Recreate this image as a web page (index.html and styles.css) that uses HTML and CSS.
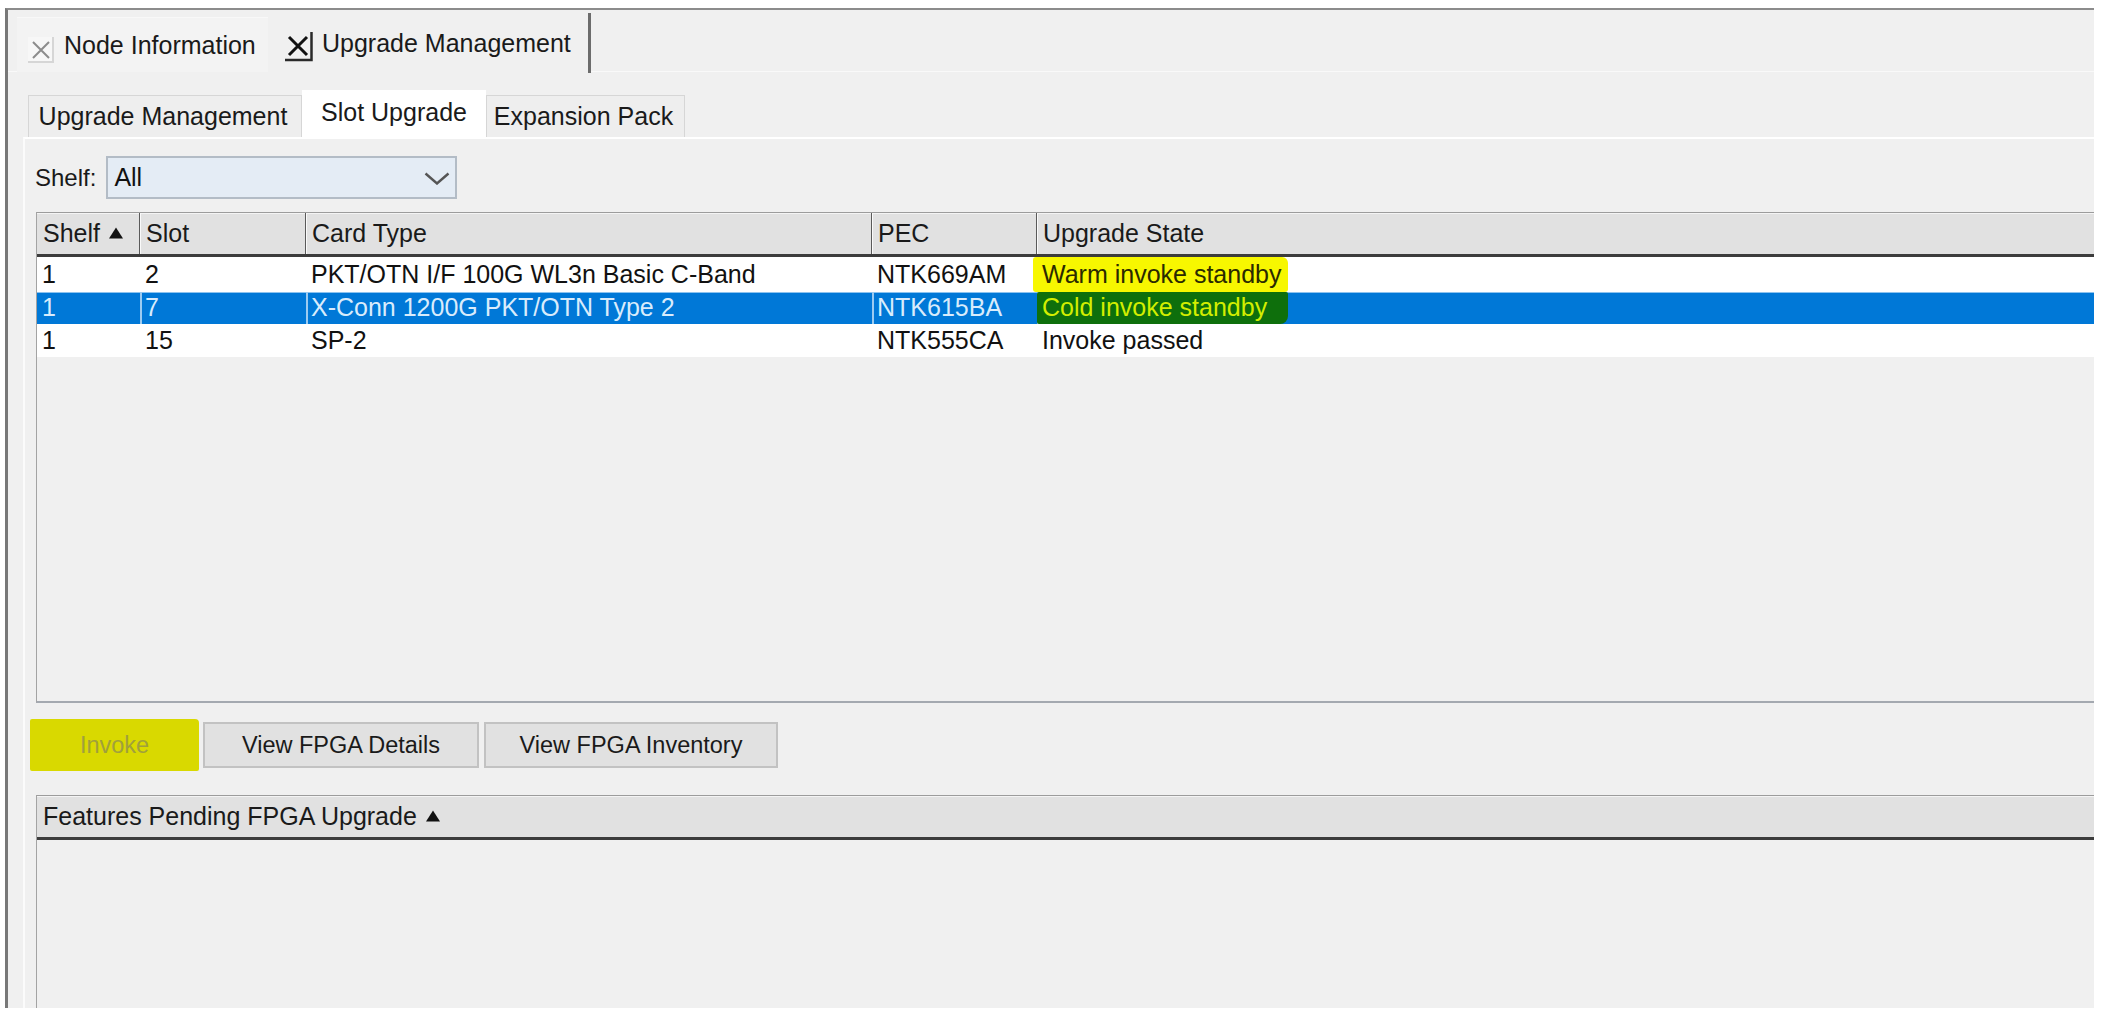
FILE: index.html
```html
<!DOCTYPE html>
<html>
<head>
<meta charset="utf-8">
<title>Slot Upgrade</title>
<link rel="stylesheet" href="styles.css">
</head>
<body>
<div class="window">
  <div class="toptabs">
    <div class="ttab ttab-inactive">
      <svg class="xicon-gray" width="26" height="26" viewBox="0 0 26 26">
        <rect x="0" y="0" width="26" height="26" fill="#f7f7f7"/>
        <path d="M25 0 V25 H0" fill="none" stroke="#d6d6d6" stroke-width="2"/>
        <path d="M5 5 L21 21 M21 5 L5 21" stroke="#8c8c8c" stroke-width="2" fill="none"/>
      </svg>
      <span class="ttab-label">Node Information</span>
    </div>
    <div class="ttab ttab-active">
      <svg class="xicon-black" width="30" height="32" viewBox="0 0 30 32">
        <path d="M5 6 L23 24 M23 6 L5 24" stroke="#111" stroke-width="3" fill="none"/>
        <path d="M1 29 H27.5 V1" fill="none" stroke="#2a2a2a" stroke-width="2.5"/>
      </svg>
      <span class="ttab-label">Upgrade Management</span>
    </div>
  </div>

  <div class="subtabs">
    <div class="stab stab-um">Upgrade Management</div>
    <div class="stab stab-active stab-su">Slot Upgrade</div>
    <div class="stab stab-ep">Expansion Pack</div>
  </div>

  <div class="panel">
    <div class="filter">
      <span class="filter-label">Shelf:</span>
      <div class="combo">
        <span class="combo-value">All</span>
        <svg class="chev" width="26" height="13" viewBox="0 0 26 13">
          <path d="M1.5 1.5 L13 11.5 L24.5 1.5" fill="none" stroke="#555" stroke-width="2.4"/>
        </svg>
      </div>
    </div>

    <div class="table table-slots">
      <div class="thead">
        <div class="th c-shelf">Shelf<svg class="sort" width="14" height="12" viewBox="0 0 14 12"><polygon points="0,11.5 7,0.5 14,11.5" fill="#111"/></svg></div>
        <div class="th c-slot">Slot</div>
        <div class="th c-card">Card Type</div>
        <div class="th c-pec">PEC</div>
        <div class="th c-state">Upgrade State</div>
      </div>
      <div class="tbody">
        <div class="tr">
          <div class="td c-shelf">1</div>
          <div class="td c-slot">2</div>
          <div class="td c-card">PKT/OTN I/F 100G WL3n Basic C-Band</div>
          <div class="td c-pec">NTK669AM</div>
          <div class="td c-state"><span class="hl hl-yellow">Warm invoke standby</span></div>
        </div>
        <div class="tr tr-selected">
          <div class="td c-shelf">1</div>
          <div class="td c-slot">7</div>
          <div class="td c-card">X-Conn 1200G PKT/OTN Type 2</div>
          <div class="td c-pec">NTK615BA</div>
          <div class="td c-state"><span class="hl hl-green">Cold invoke standby</span></div>
        </div>
        <div class="tr">
          <div class="td c-shelf">1</div>
          <div class="td c-slot">15</div>
          <div class="td c-card">SP-2</div>
          <div class="td c-pec">NTK555CA</div>
          <div class="td c-state">Invoke passed</div>
        </div>
      </div>
    </div>

    <div class="buttons">
      <div class="btn btn-invoke">Invoke</div>
      <div class="btn btn-details">View FPGA Details</div>
      <div class="btn btn-inventory">View FPGA Inventory</div>
    </div>

    <div class="table table-features">
      <div class="thead">
        <div class="th c-feature">Features Pending FPGA Upgrade<svg class="sort" width="14" height="12" viewBox="0 0 14 12"><polygon points="0,11.5 7,0.5 14,11.5" fill="#111"/></svg></div>
      </div>
      <div class="tbody-empty"></div>
    </div>
  </div>
</div>
</body>
</html>
```

FILE: styles.css
```css
html, body {
  margin: 0;
  padding: 0;
  background: #ffffff;
}

body {
  font-family: "Liberation Sans", Arial, sans-serif;
  font-size: 25px;
  color: #111;
}

.window {
  box-sizing: border-box;
  margin: 8px 0 0 5px;
  width: 2089px;
  height: 1000px;
  background: #f0f0f0;
  border-top: 2px solid #8c8c8c;
  border-left: 3px solid #787878;
  display: flex;
  flex-direction: column;
  overflow: hidden;
}

/* ---------- top tabs ---------- */
.toptabs {
  height: 62px;
  flex: none;
  display: flex;
  align-items: flex-end;
  padding-left: 9px;
  box-shadow: inset 0 -1px 0 #f9f9f9;
}

.ttab {
  box-sizing: border-box;
  display: flex;
  align-items: center;
  color: #1a1a1a;
}

.ttab-inactive {
  width: 251px;
  height: 55px;
  padding-left: 11px;
  background: #f3f3f3;
  border-top: 1px solid #f8f8f8;
}

.xicon-gray {
  flex: none;
  margin-top: 10px;
  margin-right: 10px;
}

.ttab-active {
  width: 323px;
  height: 60px;
  padding-left: 16px;
  background: #f0f0f0;
  border-right: 3px solid #6c6c6c;
  margin-bottom: -1px;
}

.xicon-black {
  flex: none;
  margin-top: 8px;
  margin-right: 8px;
}

.ttab-label {
  white-space: nowrap;
}

/* ---------- sub tabs ---------- */
.subtabs {
  flex: none;
  margin-top: 18px;
  height: 47px;
  padding-left: 20px;
  display: flex;
  align-items: flex-end;
}

.stab {
  box-sizing: border-box;
  height: 42px;
  line-height: 40px;
  text-align: center;
  white-space: nowrap;
  background: #eeeeee;
  border: 1px solid #d6d6d6;
  border-bottom: none;
  color: #1a1a1a;
}

.stab-um { width: 274px; padding-right: 4px; }
.stab-su { width: 184px; }
.stab-ep { width: 199px; padding-right: 4px; }

.stab-active {
  height: 49px;
  line-height: 42px;
  background: #ffffff;
  border-color: #ffffff;
  margin-bottom: -2px;
  position: relative;
}

/* ---------- panel ---------- */
.panel {
  flex: 1;
  margin-left: 15px;
  border-top: 2px solid #ffffff;
  border-left: 2px solid #fbfbfb;
  display: flex;
  flex-direction: column;
  min-height: 0;
}

.filter {
  flex: none;
  margin-top: 17px;
  height: 43px;
  padding-left: 10px;
  display: flex;
  align-items: center;
}

.filter-label {
  font-size: 24px;
  margin-right: 10px;
  color: #1a1a1a;
}

.combo {
  box-sizing: border-box;
  width: 351px;
  height: 43px;
  background: #e4ecf5;
  border: 2px solid #b3bcc6;
  display: flex;
  align-items: center;
  justify-content: space-between;
  padding-left: 6px;
  padding-right: 5px;
}

.combo-value {
  font-size: 25px;
}

.chev {
  flex: none;
  margin-top: 2px;
}

/* ---------- tables ---------- */
.table {
  margin-left: 11px;
  border-top: 1px solid #9c9c9c;
  border-left: 1px solid #a3a3a3;
  display: flex;
  flex-direction: column;
}

.table-slots {
  flex: none;
  margin-top: 13px;
  height: 491px;
  box-sizing: border-box;
  border-bottom: 2px solid #a4a9b0;
}

.thead {
  flex: none;
  display: flex;
  height: 41px;
  background: #e1e1e1;
  border-bottom: 3px solid #3c3c3c;
  box-shadow: inset 0 1px 0 #f4f4f4;
}

.th {
  box-sizing: border-box;
  height: 41px;
  line-height: 41px;
  padding-left: 6px;
  white-space: nowrap;
  display: flex;
  align-items: center;
  border-right: 1px solid #5a5a5a;
  box-shadow: inset 1px 0 0 #fafafa;
  color: #1a1a1a;
}

.th:first-child {
  box-shadow: none;
}

.sort {
  margin-left: 9px;
  margin-top: -2px;
}

.c-shelf { width: 103px; flex: none; }
.c-slot  { width: 166px; flex: none; }
.c-card  { width: 566px; flex: none; }
.c-pec   { width: 165px; flex: none; }
.c-state { flex: 1; border-right: none; }
.c-feature { flex: 1; border-right: none; }

.tbody {
  flex: 1;
  background: #f0f0f0;
  display: flex;
  flex-direction: column;
}

.tr {
  display: flex;
  height: 33px;
  background: #ffffff;
}

.tr:first-child {
  height: 35px;
}

.td {
  box-sizing: border-box;
  height: 100%;
  line-height: 33px;
  padding-left: 5px;
  white-space: nowrap;
  color: #111;
}

.tr:first-child .td {
  line-height: 35px;
}

.tr-selected {
  height: 32px;
  background: #0078d7;
  box-shadow: inset 0 1px 0 #8cc3ef;
}

.tr-selected .td {
  color: #d9ecfc;
  line-height: 31px;
}

.tr-selected .td + .td {
  border-left: 2px solid #9ccbf1;
  padding-left: 3px;
}

.hl {
  display: inline-block;
  height: 100%;
  margin-left: -9px;
  padding-left: 9px;
  width: 246px;
}

.tr-selected .hl {
  margin-left: -5px;
  padding-left: 5px;
}

.hl-yellow {
  background: #f7f700;
  color: #2a2a00;
  border-radius: 3px 6px 3px 3px;
}

.hl-green {
  background: #0e6f0c;
  color: #d3ee00;
  border-radius: 2px 2px 8px 2px;
}

.tr-selected .c-state {
  border-left-color: #c9e27a;
}

/* ---------- buttons ---------- */
.buttons {
  flex: none;
  margin-top: 17px;
  height: 50px;
  padding-left: 5px;
  display: flex;
  align-items: center;
}

.btn {
  box-sizing: border-box;
  height: 46px;
  display: flex;
  align-items: center;
  justify-content: center;
  font-size: 23.5px;
  white-space: nowrap;
  background: #e1e1e1;
  border: 2px solid #c2c2c2;
  color: #1a1a1a;
}

.btn-invoke {
  width: 169px;
  height: 52px;
  background: #d9d900;
  border: none;
  color: #a0a03c;
  border-radius: 2px 4px 2px 2px;
}

.btn-details {
  width: 276px;
  margin-left: 4px;
}

.btn-inventory {
  width: 294px;
  margin-left: 5px;
}

.table-features {
  flex: 1;
  margin-top: 25px;
  min-height: 0;
}

.tbody-empty {
  flex: 1;
  background: #f0f0f0;
}
```
